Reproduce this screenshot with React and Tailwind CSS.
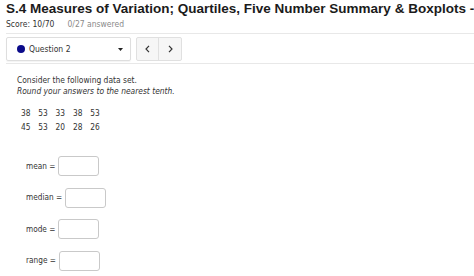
import React from "react";

const FONT = "font-['DejaVu_Sans_Condensed','DejaVu_Sans',sans-serif]";

function Chevron({ dir }) {
  return (
    <svg width="5" height="8" viewBox="0 0 5 8" className="block">
      {dir === "left" ? (
        <polyline points="4,0.8 1,4 4,7.2" fill="none" stroke="#333" strokeWidth="1.2" />
      ) : (
        <polyline points="1,0.8 4,4 1,7.2" fill="none" stroke="#333" strokeWidth="1.2" />
      )}
    </svg>
  );
}

function AnswerRow({ label }) {
  return (
    <div className="flex items-center h-[20px]">
      <span className="text-[8.2px] text-[#333] whitespace-nowrap">{label} =</span>
      <div className="ml-[3px] w-[41px] h-[20px] border border-[#c9c9c9] rounded-[3px] bg-white" />
    </div>
  );
}

export default function App() {
  const rows = [
    ["38", "53", "33", "38", "53"],
    ["45", "53", "20", "28", "26"],
  ];
  return (
    <div className={`w-[474px] h-[276px] bg-white overflow-hidden ${FONT} text-[#333]`}>
      <h1 className="pl-[6px] pt-[1px] text-[13.5px] leading-[16px] font-bold whitespace-nowrap text-[#1b1b1b] font-['Liberation_Sans',Arial,sans-serif]">
        S.4 Measures of Variation; Quartiles, Five Number Summary &amp; Boxplots - Homework
      </h1>
      <div className="pl-[6px] mt-[1px] flex gap-[13px] text-[8.5px] leading-[12px]">
        <span className="text-[#333]">Score: 10/70</span>
        <span className="text-[#8a8a8a]">0/27 answered</span>
      </div>
      <div className="ml-[6px] mt-[3px] border-t border-b border-[#e8e8e8] pt-[3px] pb-[2px] flex items-center gap-[5px]">
        <div className="w-[125px] h-[24px] border border-[#dedede] rounded-[2px] flex items-center pl-[10px] pr-[6px] shadow-[0_1px_1px_rgba(0,0,0,0.05)]">
          <span className="w-[8px] h-[8px] rounded-full bg-[#0b0b8a]" />
          <span className="ml-[4px] text-[8.5px] text-[#333]">Question 2</span>
          <svg width="5" height="3" viewBox="0 0 5 3" className="ml-auto mr-[1px]">
            <polygon points="0,0 5,0 2.5,3" fill="#222" />
          </svg>
        </div>
        <div className="h-[24px] flex border border-[#e0e0e0] rounded-[2px] bg-[#f6f6f6]">
          <div className="w-[22px] flex items-center justify-center border-r border-[#e0e0e0]">
            <Chevron dir="left" />
          </div>
          <div className="w-[22px] flex items-center justify-center">
            <Chevron dir="right" />
          </div>
        </div>
      </div>
      <div className="pl-[17px] pt-[11px]">
        <p className="text-[8.4px] leading-[10.5px]">Consider the following data set.</p>
        <p className="text-[8.4px] leading-[10.5px] italic">Round your answers to the nearest tenth.</p>
        <table className="mt-[10px] ml-[4px] text-[8.3px] leading-[14px]">
          <tbody>
            {rows.map((r, i) => (
              <tr key={i}>
                {r.map((v, j) => (
                  <td key={j} className="w-[17.3px] p-0 align-middle">{v}</td>
                ))}
              </tr>
            ))}
          </tbody>
        </table>
        <div className="ml-[9px] mt-[22px] flex flex-col gap-[11.5px]">
          <AnswerRow label="mean" />
          <AnswerRow label="median" />
          <AnswerRow label="mode" />
          <AnswerRow label="range" />
        </div>
      </div>
    </div>
  );
}
